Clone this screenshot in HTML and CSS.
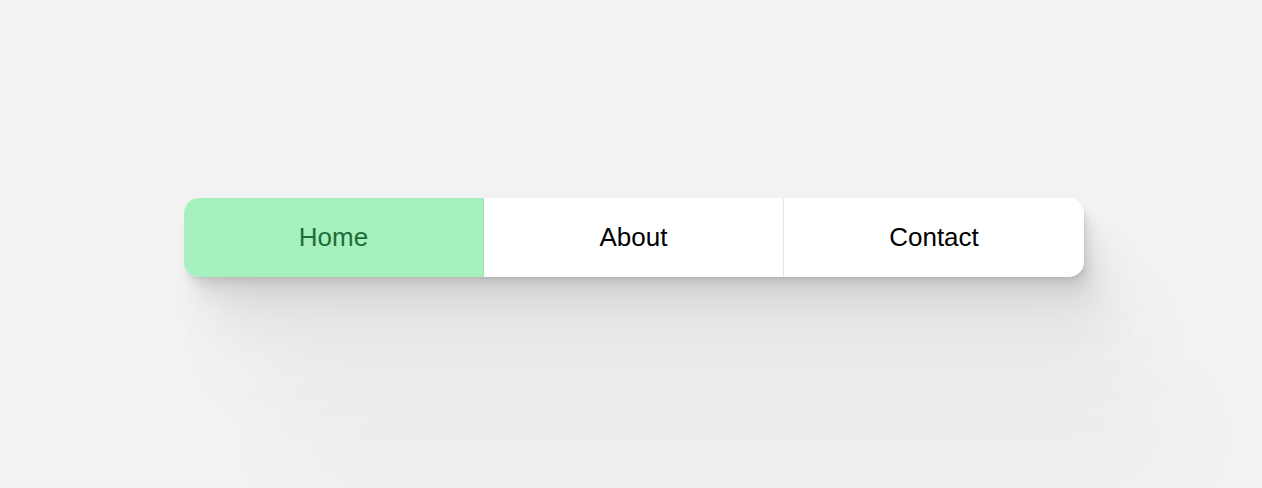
FILE: index.html
```html
<!DOCTYPE html>
<html lang="en">
<head>
<meta charset="utf-8">
<title>Nav</title>
<link rel="stylesheet" href="styles.css">
</head>
<body>
<main class="stage">
  <nav class="tabs">
    <a class="tab tab-active" href="#">Home</a>
    <a class="tab" href="#">About</a>
    <a class="tab" href="#">Contact</a>
  </nav>
</main>
</body>
</html>
```
FILE: styles.css
```css
html, body {
  margin: 0;
  padding: 0;
  background: #f2f2f2;
  height: 100%;
  overflow: hidden;
}
.stage {
  padding-top: 198px;
  padding-left: 6px;
  display: flex;
  justify-content: center;
}
.tabs {
  display: flex;
  width: 900px;
  height: 79px;
  border-radius: 15px;
  background: #fff;
  overflow: hidden;
  box-shadow:
    1px 2px 2px rgba(0,0,0,0.05),
    3px 6px 6px rgba(0,0,0,0.05),
    6px 12px 12px rgba(0,0,0,0.05),
    12px 24px 24px rgba(0,0,0,0.05),
    25px 50px 50px rgba(0,0,0,0.05),
    50px 100px 100px rgba(0,0,0,0.04),
    100px 200px 120px rgba(0,0,0,0.035);
}
.tab {
  flex: 0 0 300px;
  box-sizing: border-box;
  display: flex;
  align-items: center;
  justify-content: center;
  font-family: "Liberation Sans", Arial, sans-serif;
  font-size: 26px;
  color: #000;
  text-decoration: none;
  border-right: 1px solid #e6e6e6;
}
.tab:last-child {
  border-right: none;
}
.tab-active {
  background: #a6f0bd;
  color: #1d6d39;
  border-right-color: #a0dcb2;
}
```
